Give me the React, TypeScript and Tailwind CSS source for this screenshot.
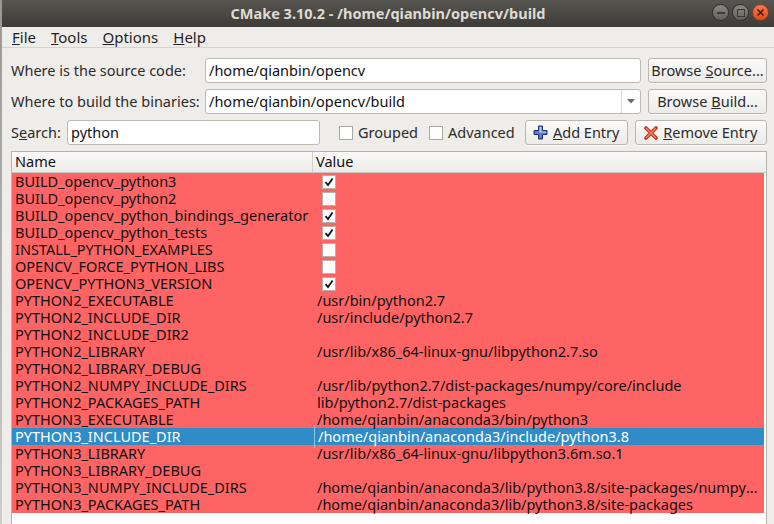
import React from "react";

const font = { fontFamily: '"Noto Sans", "Open Sans", sans-serif' };

type Row = { name: string; value?: string; check?: boolean };

const rows: Row[] = [
  { name: "BUILD_opencv_python3", check: true },
  { name: "BUILD_opencv_python2", check: false },
  { name: "BUILD_opencv_python_bindings_generator", check: true },
  { name: "BUILD_opencv_python_tests", check: true },
  { name: "INSTALL_PYTHON_EXAMPLES", check: false },
  { name: "OPENCV_FORCE_PYTHON_LIBS", check: false },
  { name: "OPENCV_PYTHON3_VERSION", check: true },
  { name: "PYTHON2_EXECUTABLE", value: "/usr/bin/python2.7" },
  { name: "PYTHON2_INCLUDE_DIR", value: "/usr/include/python2.7" },
  { name: "PYTHON2_INCLUDE_DIR2", value: "" },
  { name: "PYTHON2_LIBRARY", value: "/usr/lib/x86_64-linux-gnu/libpython2.7.so" },
  { name: "PYTHON2_LIBRARY_DEBUG", value: "" },
  { name: "PYTHON2_NUMPY_INCLUDE_DIRS", value: "/usr/lib/python2.7/dist-packages/numpy/core/include" },
  { name: "PYTHON2_PACKAGES_PATH", value: "lib/python2.7/dist-packages" },
  { name: "PYTHON3_EXECUTABLE", value: "/home/qianbin/anaconda3/bin/python3" },
  { name: "PYTHON3_INCLUDE_DIR", value: "/home/qianbin/anaconda3/include/python3.8" },
  { name: "PYTHON3_LIBRARY", value: "/usr/lib/x86_64-linux-gnu/libpython3.6m.so.1" },
  { name: "PYTHON3_LIBRARY_DEBUG", value: "" },
  { name: "PYTHON3_NUMPY_INCLUDE_DIRS", value: "/home/qianbin/anaconda3/lib/python3.8/site-packages/numpy/core/include" },
  { name: "PYTHON3_PACKAGES_PATH", value: "/home/qianbin/anaconda3/lib/python3.8/site-packages" },
];

function Btn({ children, className = "" }: { children: React.ReactNode; className?: string }) {
  return (
    <div
      className={`flex h-[25px] shrink-0 items-center justify-center rounded-[3px] border border-[#b9b6b1] bg-gradient-to-b from-[#fbfbfa] to-[#ecebe8] text-[#2b2b2b] shadow-[0_1px_0_rgba(255,255,255,0.8)] ${className}`}
    >
      {children}
    </div>
  );
}

function Box({ checked, className = "" }: { checked?: boolean; className?: string }) {
  return (
    <div className={`flex h-[14px] w-[14px] shrink-0 items-center justify-center border border-[#aaa7a2] bg-white ${className}`}>
      {checked && (
        <svg width="10" height="10" viewBox="0 0 10 10">
          <path d="M1.5 5.2 L4 8 L8.6 1.4" fill="none" stroke="#111" strokeWidth="1.8" />
        </svg>
      )}
    </div>
  );
}

function WinBtn({ close, children }: { close?: boolean; children: React.ReactNode }) {
  return (
    <div
      className={`flex h-[17px] w-[17px] items-center justify-center rounded-full border ${
        close
          ? "border-[#8a3a1c] bg-gradient-to-b from-[#f4794b] to-[#df4a16]"
          : "border-[#2f2e2b] bg-gradient-to-b from-[#8a8984] to-[#62615c]"
      }`}
    >
      {children}
    </div>
  );
}

export default function App() {
  return (
    <div className="flex h-[524px] w-[774px] overflow-hidden bg-[#c9c7c3] text-[14.5px]" style={font}>
      <div className="w-[2px] shrink-0 bg-gradient-to-b from-[#9a9893] to-[#cfcdc9]" />
      <div className="flex min-w-0 flex-1 flex-col bg-[#efedea]">
        {/* title bar */}
        <div className="relative flex h-[27px] shrink-0 items-center justify-center bg-gradient-to-b from-[#57554f] to-[#3d3c38]">
          <span className="font-bold text-[#dfdbd2]">CMake 3.10.2 - /home/qianbin/opencv/build</span>
          <div className="absolute right-[5px] top-[4px] flex gap-[3px]">
            <WinBtn>
              <div className="h-[2px] w-[8px] bg-[#3a3935]" />
            </WinBtn>
            <WinBtn>
              <div className="h-[8px] w-[8px] border-[1.5px] border-[#3a3935]" />
            </WinBtn>
            <WinBtn close>
              <svg width="9" height="9" viewBox="0 0 9 9">
                <path d="M1.5 1.5 L7.5 7.5 M7.5 1.5 L1.5 7.5" stroke="#4a1a08" strokeWidth="1.6" />
              </svg>
            </WinBtn>
          </div>
        </div>

        {/* menu */}
        <div className="flex h-[21px] shrink-0 items-center gap-[15px] border-b border-[#d6d3cf] pl-[10px] text-[15px] text-[#1f1f1f]">
          <span><u>F</u>ile</span>
          <span><u>T</u>ools</span>
          <span><u>O</u>ptions</span>
          <span><u>H</u>elp</span>
        </div>

        <div className="flex min-w-0 flex-1 flex-col pl-[9px] pr-[7px] pt-[10px] text-[#2b2b2b]">
          {/* source row */}
          <div className="flex h-[25px] items-center">
            <span className="w-[194px] shrink-0">Where is the source code:</span>
            <div className="flex h-[25px] min-w-0 flex-1 items-center rounded-[3px] border border-[#bdbab5] bg-white pl-[3px] text-[#111]">
              /home/qianbin/opencv
            </div>
            <Btn className="ml-[7px] w-[119px]">
              Browse <u className="ml-[4px]">S</u>ource...
            </Btn>
          </div>

          {/* build row */}
          <div className="mt-[6px] flex h-[25px] items-center">
            <span className="w-[194px] shrink-0">Where to build the binaries:</span>
            <div className="flex h-[25px] min-w-0 flex-1 items-center rounded-[3px] border border-[#bdbab5] bg-white pl-[3px] text-[#111]">
              <span className="flex-1">/home/qianbin/opencv/build</span>
              <div className="flex h-full w-[19px] items-center justify-center border-l border-[#dcdad6]">
                <svg width="8" height="5" viewBox="0 0 8 5">
                  <path d="M0 0 H8 L4 4.5 Z" fill="#6a6a6a" />
                </svg>
              </div>
            </div>
            <Btn className="ml-[7px] w-[119px]">
              Browse <u className="ml-[4px]">B</u>uild...
            </Btn>
          </div>

          {/* search row */}
          <div className="mt-[6px] flex h-[25px] items-center">
            <span className="w-[56px] shrink-0">
              S<u>e</u>arch:
            </span>
            <div className="flex h-[25px] w-[253px] shrink-0 items-center rounded-[3px] border border-[#bdbab5] bg-white pl-[3px] text-[#111]">
              python
            </div>
            <Box className="ml-[19px]" />
            <span className="ml-[5px]">Grouped</span>
            <Box className="ml-[11px]" />
            <span className="ml-[5px]">Advanced</span>
            <Btn className="ml-[10px] w-[103px] gap-[5px]">
              <svg width="15" height="15" viewBox="0 0 15 15">
                <path
                  d="M5.5 1 H9.5 V5.5 H14 V9.5 H9.5 V14 H5.5 V9.5 H1 V5.5 H5.5 Z"
                  fill="#5b7fcf"
                  stroke="#1f2f66"
                  strokeWidth="1"
                />
                <path d="M6.5 2 H8.5 V6.5 H13 V7.5 H6.5 Z" fill="#b7c9f0" />
              </svg>
              <span>
                <u>A</u>dd Entry
              </span>
            </Btn>
            <Btn className="ml-[7px] min-w-0 flex-1 shrink gap-[5px]">
              <svg width="14" height="14" viewBox="0 0 14 14">
                <path d="M2 2 L12 12 M12 2 L2 12" stroke="#c9391a" strokeWidth="3.6" strokeLinecap="round" />
                <path d="M2.5 2.5 L11.5 11.5 M11.5 2.5 L2.5 11.5" stroke="#f0846a" strokeWidth="1.2" strokeLinecap="round" />
              </svg>
              <span>
                <u>R</u>emove Entry
              </span>
            </Btn>
          </div>

          {/* table */}
          <div className="mt-[6px] flex min-w-0 flex-1 flex-col overflow-hidden border border-b-0 border-[#b6b3ae] bg-white text-[#111]">
            <div className="flex h-[21px] shrink-0 items-center border-b border-[#c9c6c1] bg-gradient-to-b from-[#fbfaf9] to-[#edebe8]">
              <div className="flex h-full w-[301px] items-center border-r border-[#d2cfca] pl-[3px]">Name</div>
              <div className="pl-[3px]">Value</div>
            </div>
            <div className="flex min-w-0 flex-col pr-[2px] leading-[17px]">
              {rows.map((r) => {
                const sel = r.name === "PYTHON3_INCLUDE_DIR";
                return (
                  <div
                    key={r.name}
                    className={`flex h-[17px] min-w-0 items-center ${sel ? "bg-[#308cc6] text-white" : "bg-[#ff6464]"}`}
                  >
                    <div className="relative w-[302px] shrink-0 whitespace-nowrap pl-[3px]">{r.name}</div>
                    {r.check !== undefined ? (
                      <Box checked={r.check} className="ml-[8px] h-[13px] w-[13px] border-[#b5b2ad]" />
                    ) : (
                      <div
                        className={`relative min-w-0 flex-1 truncate py-[3px] pl-[3px] pr-[4px] ${sel ? "border-l border-[#8fc3e4]" : ""}`}
                      >
                        {r.value}
                      </div>
                    )}
                  </div>
                );
              })}
            </div>
          </div>
        </div>
      </div>
    </div>
  );
}
